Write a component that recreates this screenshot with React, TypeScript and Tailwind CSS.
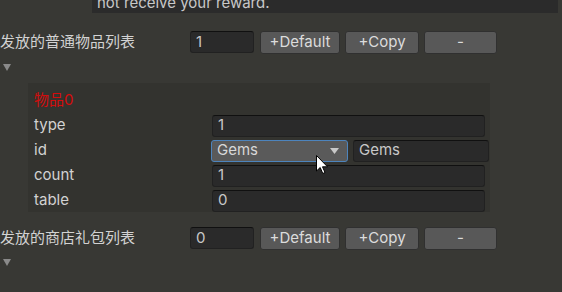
import React from "react";

const cjk = { fontFamily: "Inter, 'Noto Sans CJK SC', sans-serif" };

function Field({ value, w, cls = "" }: { value: string; w: string; cls?: string }) {
  return (
    <div
      className={`${w} h-[22px] rounded-[3px] bg-[#2a2a2a] border border-[#212121] border-t-[#101010] flex items-center pl-[5px] text-[15px] text-[#c8c8c8] ${cls}`}
    >
      {value}
    </div>
  );
}

function Btn({ label, w }: { label: string; w: string }) {
  return (
    <div
      className={`${w} h-[23px] rounded-[3px] bg-[#585858] border border-[#303030] flex items-center justify-center text-[15px] text-[#dcdcdc]`}
    >
      {label}
    </div>
  );
}

function Tri() {
  return (
    <svg width="8" height="7" viewBox="0 0 8 7" className="ml-[3px]">
      <path d="M0 0 L8 0 L4 7 Z" fill="#8a8a8a" />
    </svg>
  );
}

function ListRow({ label, count }: { label: string; count: string }) {
  return (
    <div className="flex items-center h-[24px]">
      <div className="w-[190px] text-[15px] text-[#d2d2d2]" style={cjk}>
        {label}
      </div>
      <Field value={count} w="w-[64px]" />
      <div className="flex gap-[5px] ml-[6px]">
        <Btn label="+Default" w="w-[80px]" />
        <Btn label="+Copy" w="w-[74px]" />
        <Btn label="-" w="w-[73px]" />
      </div>
    </div>
  );
}

function PropRow({ label, children }: { label: string; children: React.ReactNode }) {
  return (
    <div className="flex items-center h-[25px]">
      <div className="w-[184px] pl-[6px] text-[15px] text-[#d2d2d2]">{label}</div>
      {children}
    </div>
  );
}

export default function App() {
  return (
    <div
      className="relative w-[562px] h-[292px] overflow-hidden bg-[#383834]"
      style={{ fontFamily: "Inter, 'Noto Sans CJK SC', sans-serif" }}
    >
      <div className="ml-[92px] mr-[4px] h-[13px] overflow-hidden bg-[#2b2b2b]">
        <div className="mt-[-7px] leading-[20px] pl-[5px] text-[15px] text-[#c8c8c8]">
          not receive your reward.
        </div>
      </div>

      <div className="mt-[17px]">
        <ListRow label="发放的普通物品列表" count="1" />
      </div>
      <div className="mt-[10px] h-[8px] flex items-start">
        <Tri />
      </div>

      <div className="mt-[11px] ml-[28px] w-[462px] h-[129px] bg-[#33332f] pt-[5px]">
        <div className="h-[25px] flex items-center pl-[6px] text-[15px] text-[#d40c0c]" style={cjk}>
          物品0
        </div>
        <PropRow label="type">
          <Field value="1" w="w-[273px]" />
        </PropRow>
        <PropRow label="id">
          <div className="flex items-center">
            <div className="w-[137px] h-[22px] -ml-[1px] rounded-[3px] bg-[#5a5a5a] border border-[#4d84bd] flex items-center justify-between pl-[5px] pr-[8px] text-[15px] text-[#d8d8d8]">
              <span>Gems</span>
              <svg width="9" height="6" viewBox="0 0 9 6">
                <path d="M0 0 L9 0 L4.5 6 Z" fill="#c8c8c8" />
              </svg>
            </div>
            <Field value="Gems" w="w-[136px]" cls="ml-[5px]" />
          </div>
        </PropRow>
        <PropRow label="count">
          <Field value="1" w="w-[273px]" />
        </PropRow>
        <PropRow label="table">
          <Field value="0" w="w-[273px]" />
        </PropRow>
      </div>

      <div className="mt-[14px]">
        <ListRow label="发放的商店礼包列表" count="0" />
      </div>
      <div className="mt-[9px] h-[8px] flex items-start">
        <Tri />
      </div>

      <svg
        className="absolute left-[316px] top-[155px]"
        width="13"
        height="20"
        viewBox="0 0 13 20"
      >
        <path
          d="M0.5 0.5 L0.5 16 L4.2 12.5 L6.8 18.5 L9 17.5 L6.5 11.8 L11.5 11.8 Z"
          fill="#ffffff"
          stroke="#000000"
          strokeWidth="1"
          strokeLinejoin="round"
        />
      </svg>
    </div>
  );
}
